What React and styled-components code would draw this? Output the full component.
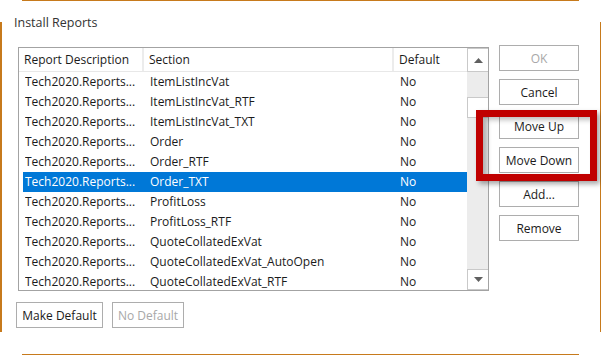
import React from "react";
import styled, { createGlobalStyle } from "styled-components";

const Global = createGlobalStyle`
  html, body { margin: 0; padding: 0; background: #fff; }
  body { font-family: "Open Sans", "Noto Sans", sans-serif; }
`;

const ORANGE = "#c77a1c";

const Frame = styled.div`
  position: relative;
  width: 601px;
  height: 355px;
  display: grid;
  grid-template-columns: 2px 1fr 1px;
  grid-template-rows: 1px 1fr 1px;
  overflow: hidden;
  background: #fff;
`;

const HRule = styled.div`
  grid-column: 1 / -1;
  grid-row: ${(p) => p.$row};
  margin: 0 22px;
  background: ${ORANGE};
`;

const VRule = styled.div`
  grid-row: 2;
  grid-column: ${(p) => p.$col};
  margin: 21px 0 22px;
  background: ${ORANGE};
`;

const Content = styled.div`
  grid-row: 2;
  grid-column: 2;
  padding: 14px 0 0 12px;
  display: flex;
  flex-direction: column;
  font-size: 12px;
  color: #1b1b1b;
`;

const Title = styled.div`
  height: 16px;
  line-height: 16px;
  font-size: 12.5px;
  color: #333;
  margin-bottom: 16px;
`;

const Main = styled.div`
  display: flex;
  align-items: flex-start;
`;

const LeftCol = styled.div`
  display: flex;
  flex-direction: column;
`;

const ListBox = styled.div`
  margin-left: 4px;
  width: 469px;
  height: 242px;
  border: 1px solid #a3a3a3;
  display: flex;
  overflow: hidden;
`;

const Table = styled.div`
  flex: 1;
  display: flex;
  flex-direction: column;
  min-width: 0;
`;

const Header = styled.div`
  height: 23px;
  border-bottom: 1px solid #e8e8e8;
  display: grid;
  grid-template-columns: 125px 250px 1fr;
`;

const HeaderCell = styled.div`
  padding-left: 5px;
  line-height: 23px;
  border-left: ${(p) => (p.$first ? "none" : "2px solid #ececec")};
  margin-left: ${(p) => (p.$first ? "0" : "-2px")};
  color: #1b1b1b;
  white-space: nowrap;
`;

const Rows = styled.div`
  flex: 1;
  overflow: hidden;
  padding-left: 4px;
`;

const Row = styled.div`
  height: 20px;
  line-height: 20px;
  padding-left: 2px;
  display: grid;
  grid-template-columns: 125px 250px 1fr;
  background: ${(p) => (p.$selected ? "#0078d7" : "transparent")};
  color: ${(p) => (p.$selected ? "#fff" : "#1b1b1b")};
  white-space: nowrap;
`;

const Cell = styled.div`
  overflow: hidden;
`;

const ScrollBar = styled.div`
  width: 21px;
  background: #ececec;
  display: flex;
  flex-direction: column;
`;

const ArrowBtn = styled.div`
  height: ${(p) => p.$h}px;
  box-sizing: border-box;
  background: #fff;
  border: 1px solid #c9c9c9;
  border-right: none;
  display: flex;
  align-items: center;
  justify-content: center;
`;

const Track = styled.div`
  flex: 1;
  padding-top: 25px;
`;

const Thumb = styled.div`
  height: 21px;
  box-sizing: border-box;
  background: #fff;
  border: 1px solid #c9c9c9;
  border-right: none;
`;

const BottomRow = styled.div`
  display: flex;
  gap: 9px;
  margin-top: 11px;
  margin-left: 2px;
`;

const Button = styled.div`
  box-sizing: border-box;
  width: ${(p) => p.$w}px;
  height: ${(p) => p.$h || 26}px;
  border: 1px solid #adadad;
  background: #fff;
  display: flex;
  align-items: center;
  justify-content: center;
  font-size: 12px;
  color: ${(p) => (p.$disabled ? "#a8a8a8" : "#1b1b1b")};
  white-space: nowrap;
`;

const RightCol = styled.div`
  margin-left: 10px;
  margin-top: -2px;
  display: flex;
  flex-direction: column;
  gap: 8px;
`;

const Highlight = styled.div`
  position: absolute;
  left: 476px;
  top: 110px;
  width: 121px;
  height: 71px;
  box-sizing: border-box;
  border: 7px solid #c00000;
  box-shadow: 3px 3px 5px rgba(0, 0, 0, 0.35),
    inset 4px 3px 5px rgba(0, 0, 0, 0.25);
  pointer-events: none;
`;

const rows = [
  "ItemListIncVat",
  "ItemListIncVat_RTF",
  "ItemListIncVat_TXT",
  "Order",
  "Order_RTF",
  "Order_TXT",
  "ProfitLoss",
  "ProfitLoss_RTF",
  "QuoteCollatedExVat",
  "QuoteCollatedExVat_AutoOpen",
  "QuoteCollatedExVat_RTF",
];

const Tri = ({ up }) => (
  <svg width="9" height="5" viewBox="0 0 9 5">
    <polygon points={up ? "0,5 9,5 4.5,0" : "0,0 9,0 4.5,5"} fill="#606060" />
  </svg>
);

export default function App() {
  return (
    <>
      <Global />
      <Frame>
        <HRule $row={1} />
        <VRule $col={1} />
        <Content>
          <Title>Install Reports</Title>
          <Main>
            <LeftCol>
              <ListBox>
                <Table>
                  <Header>
                    <HeaderCell $first>Report Description</HeaderCell>
                    <HeaderCell>Section</HeaderCell>
                    <HeaderCell>Default</HeaderCell>
                  </Header>
                  <Rows>
                    {rows.map((r) => (
                      <Row key={r} $selected={r === "Order_TXT"}>
                        <Cell>Tech2020.Reports...</Cell>
                        <Cell>{r}</Cell>
                        <Cell>No</Cell>
                      </Row>
                    ))}
                  </Rows>
                </Table>
                <ScrollBar>
                  <ArrowBtn $h={24}>
                    <Tri up />
                  </ArrowBtn>
                  <Track>
                    <Thumb />
                  </Track>
                  <ArrowBtn $h={21}>
                    <Tri />
                  </ArrowBtn>
                </ScrollBar>
              </ListBox>
              <BottomRow>
                <Button $w={87} $h={26}>Make Default</Button>
                <Button $w={72} $h={26} $disabled>
                  No Default
                </Button>
              </BottomRow>
            </LeftCol>
            <RightCol>
              <Button $w={80} $disabled>OK</Button>
              <Button $w={80}>Cancel</Button>
              <Button $w={80}>Move Up</Button>
              <Button $w={80}>Move Down</Button>
              <Button $w={80}>Add...</Button>
              <Button $w={80}>Remove</Button>
            </RightCol>
          </Main>
        </Content>
        <VRule $col={3} />
        <HRule $row={3} />
        <Highlight />
      </Frame>
    </>
  );
}
